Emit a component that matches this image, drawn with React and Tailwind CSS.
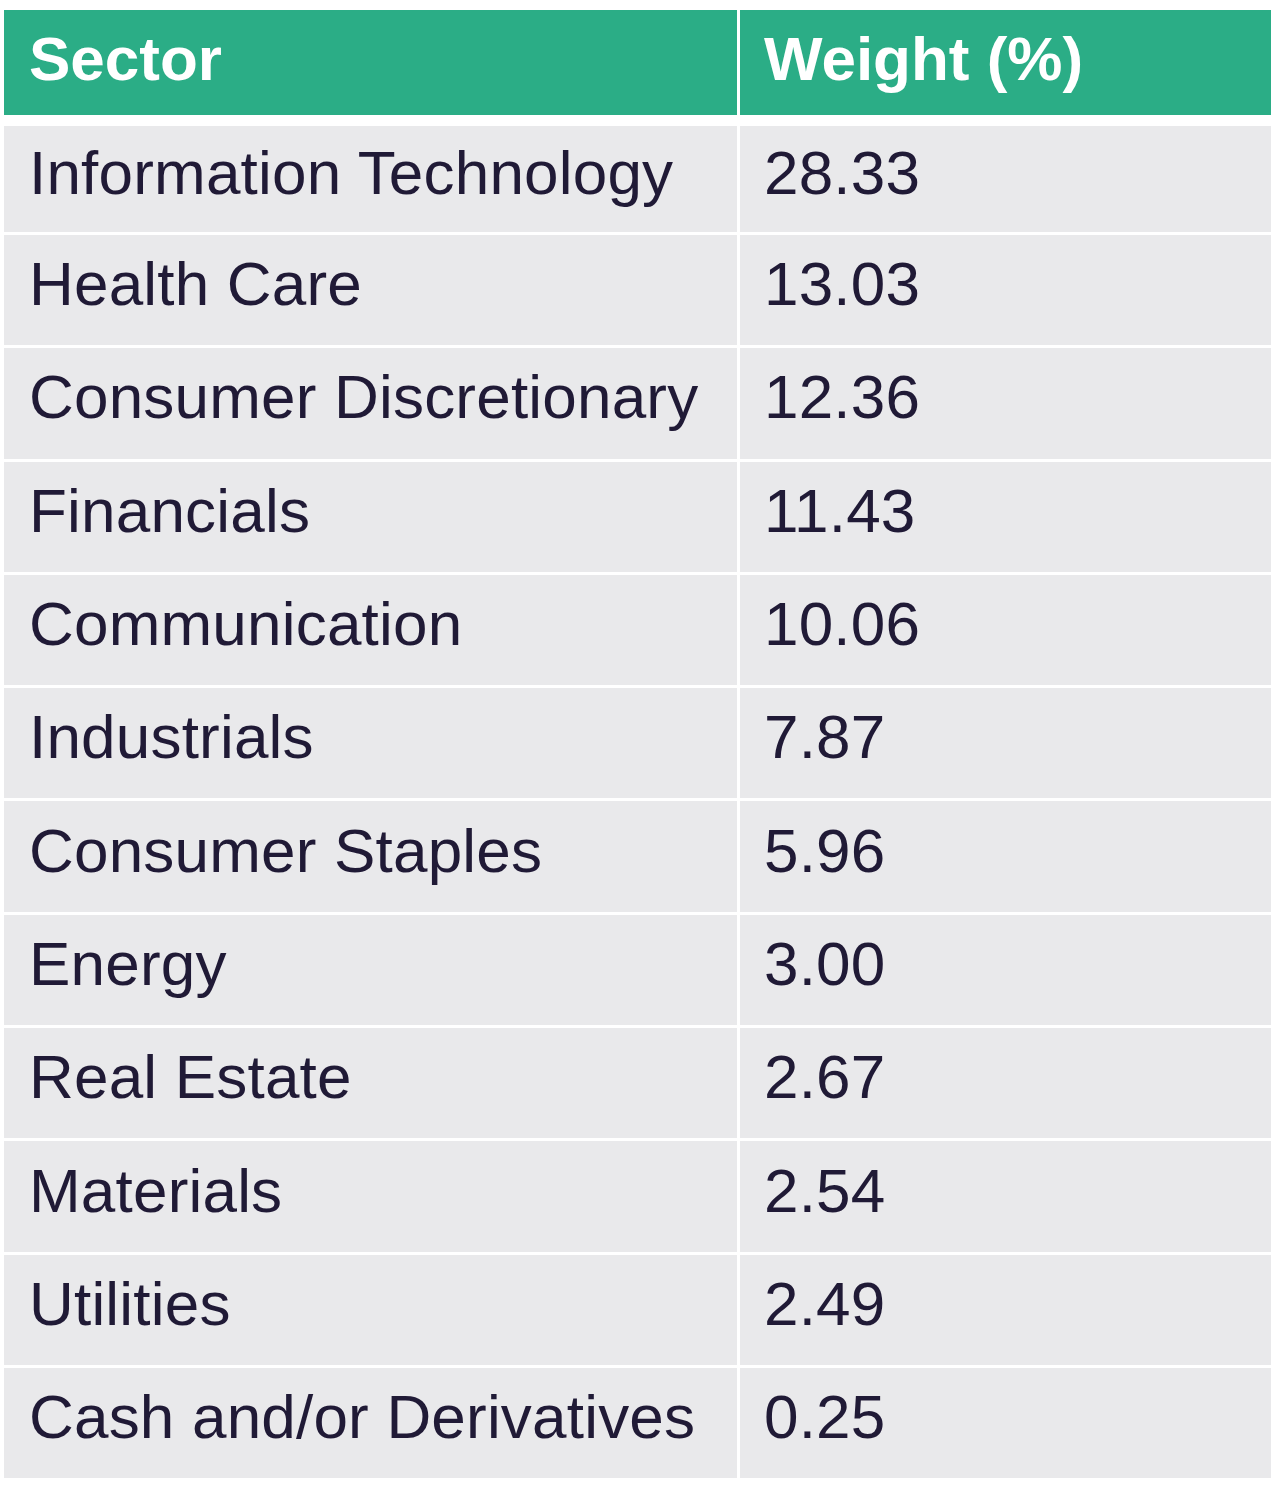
const rows = [
  ["Information Technology", "28.33"],
  ["Health Care", "13.03"],
  ["Consumer Discretionary", "12.36"],
  ["Financials", "11.43"],
  ["Communication", "10.06"],
  ["Industrials", "7.87"],
  ["Consumer Staples", "5.96"],
  ["Energy", "3.00"],
  ["Real Estate", "2.67"],
  ["Materials", "2.54"],
  ["Utilities", "2.49"],
  ["Cash and/or Derivatives", "0.25"],
];

export default function App() {
  return (
    <div
      className="min-h-[1492px] w-[1280px] bg-white pl-[4px] pt-[10px]"
      style={{ fontFamily: '"Liberation Sans", Arial, sans-serif' }}
    >
      <div className="w-[1267px]">
        <div className="grid grid-cols-[733px_531px] gap-x-[3px]">
          <div className="h-[105px] bg-[#2bad86] pl-[25px] pt-[18px] text-[62px] font-bold leading-[62px] text-white">
            Sector
          </div>
          <div className="h-[105px] bg-[#2bad86] pl-[24px] pt-[18px] text-[62px] font-bold leading-[62px] text-white">
            Weight (%)
          </div>
        </div>
        <div className="mt-[11px] grid grid-cols-[733px_531px] gap-x-[3px] gap-y-[3px]">
          {rows.map(([sector, weight], i) => (
            <div key={sector} className="contents">
              <div
                className={`flex items-center bg-[#e9e9eb] pb-[12px] pl-[25px] text-[62px] leading-[62px] tracking-[0.2px] text-[#201a36] ${
                  i === 0 ? "h-[106px]" : "h-[110.3px]"
                }`}
              >
                {sector}
              </div>
              <div
                className={`flex items-center bg-[#e9e9eb] pb-[12px] pl-[24px] text-[62px] leading-[62px] tracking-[0.2px] text-[#201a36] ${
                  i === 0 ? "h-[106px]" : "h-[110.3px]"
                }`}
              >
                {weight}
              </div>
            </div>
          ))}
        </div>
      </div>
    </div>
  );
}
